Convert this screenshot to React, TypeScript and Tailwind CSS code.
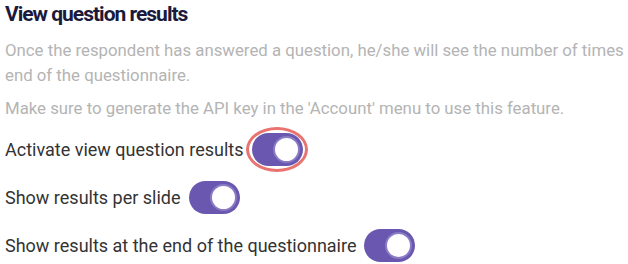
import React from "react";

function Toggle({ ring = false }: { ring?: boolean }) {
  return (
    <span className="relative inline-flex ml-[8px]">
      {ring && (
        <span className="absolute -left-[6px] -right-[5px] -top-[6px] -bottom-[6px] rounded-[50%] border-[3px] border-[#e8736f]" />
      )}
      <span className="flex h-[33px] w-[51px] items-center justify-end rounded-full bg-[#6a58b0] pr-[3px]">
        <span className="h-[27px] w-[27px] rounded-full bg-white border-[2px] border-[#8a7cc4]" />
      </span>
    </span>
  );
}

export default function App() {
  return (
    <div
      className="w-[628px] h-[264px] overflow-hidden bg-white pl-[5px]"
      style={{ fontFamily: "Roboto, 'Liberation Sans', sans-serif" }}
    >
      <div className="pt-[1px] text-[21px] font-bold leading-[27px] tracking-[-1px] text-[#1b1a3d]">View question results</div>
      <div className="mt-[10px] text-[16.8px] leading-[25px] text-[#b4b4b4] whitespace-nowrap">
        Once the respondent has answered a question, he/she will see the number of times
        <br />
        end of the questionnaire.
      </div>
      <div className="mt-[8px] text-[16.8px] leading-[25px] text-[#b4b4b4] whitespace-nowrap">
        Make sure to generate the API key in the 'Account' menu to use this feature.
      </div>
      <div className="mt-[4px] flex flex-col text-[18px] text-[#333333]">
        <div className="flex h-[48px] items-center">
          <span>Activate view question results</span>
          <Toggle ring />
        </div>
        <div className="flex h-[48px] items-center">
          <span>Show results per slide</span>
          <Toggle />
        </div>
        <div className="flex h-[48px] items-center">
          <span>Show results at the end of the questionnaire</span>
          <Toggle />
        </div>
      </div>
    </div>
  );
}
